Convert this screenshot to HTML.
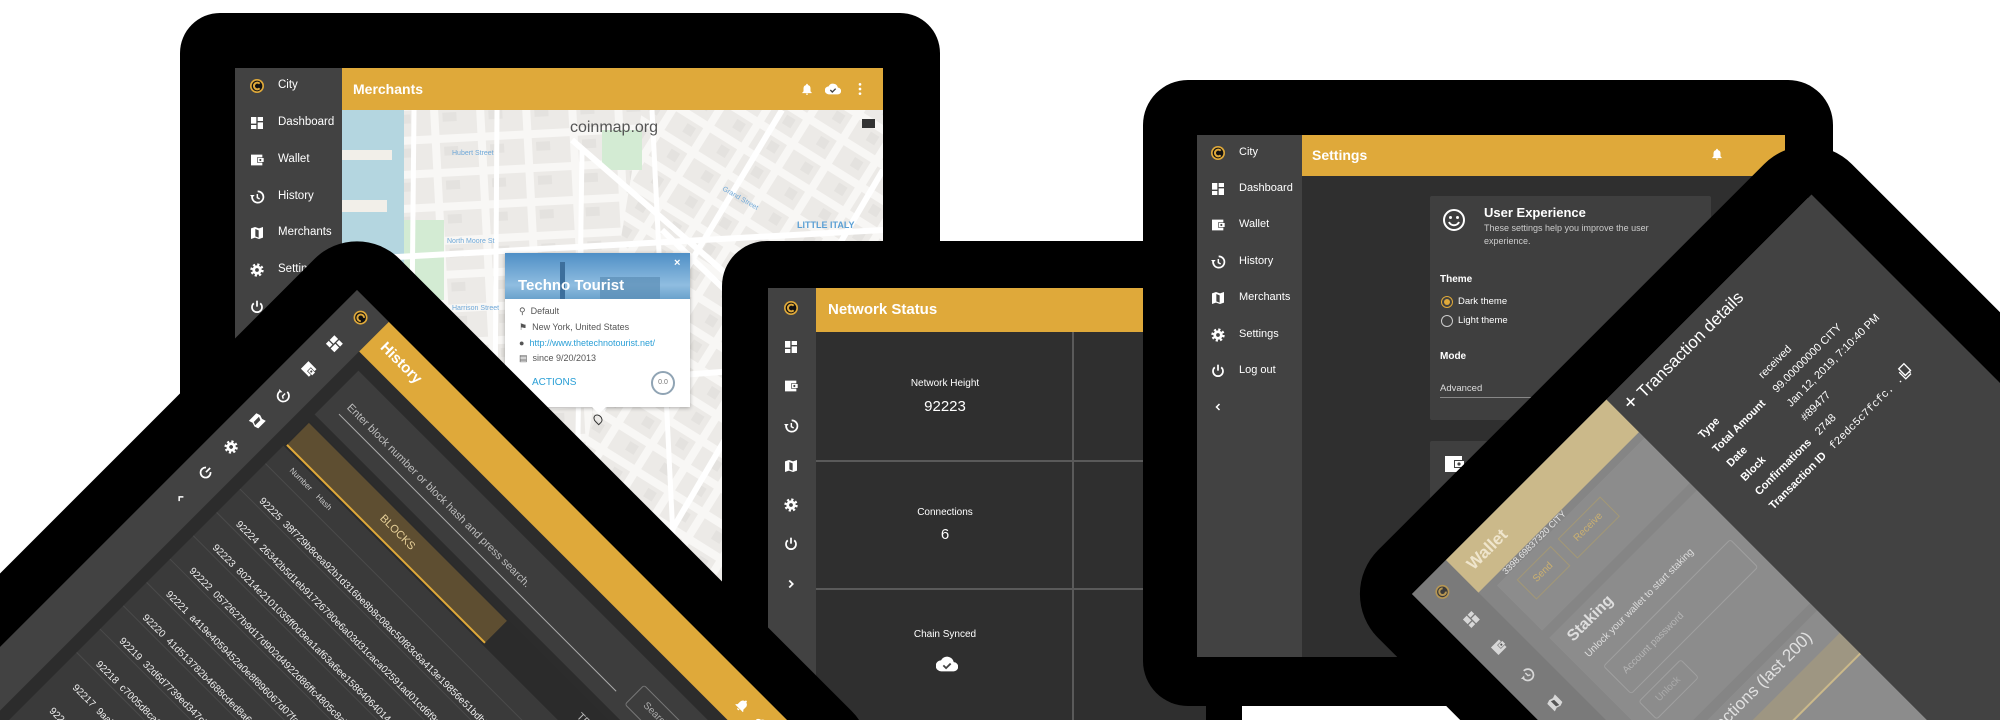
<!DOCTYPE html>
<html style="width:2000px;height:720px;overflow:hidden"><head><meta charset="utf-8">
<style>
*{margin:0;padding:0;box-sizing:border-box}
html,body{width:2000px;height:720px;overflow:hidden}
body{background:#fff;position:relative;font-family:"Liberation Sans",Arial,sans-serif;color:#fff}
#wrap{position:absolute;left:0;top:0;width:2000px;height:720px;overflow:hidden;background:#fff}
.a{position:absolute}
.i{position:absolute;width:16px;height:16px}
.t{position:absolute;white-space:nowrap}
.y{background:#dfa93a}
</style></head><body>
<svg width="0" height="0" style="position:absolute">
<defs>
<symbol id="logo" viewBox="0 0 24 24"><circle cx="12" cy="12" r="10.5" fill="#dfa93a"/><circle cx="12" cy="12" r="8" fill="#111"/><path d="M16 8.5a5 5 0 1 0 0 7" stroke="#dfa93a" stroke-width="3" fill="none"/></symbol>
<symbol id="dash" viewBox="0 0 24 24"><path d="M3 3h8v10H3zM13 3h8v6h-8zM13 11h8v10h-8zM3 15h8v6H3z" fill="#fff"/></symbol>
<symbol id="wal" viewBox="0 0 24 24"><path d="M3 4h17v4h-8v8h8v4H3z M13 9h9v6h-9z" fill="#fff"/><circle cx="17" cy="12" r="1.6" fill="#444"/></symbol>
<symbol id="his" viewBox="0 0 24 24"><path d="M13 3.5a8.5 8.5 0 1 1-8 6" stroke="#fff" stroke-width="2.6" fill="none"/><path d="M1.5 9l3.5 4 3.5-4z" fill="#fff"/><path d="M12.5 7.5v5.5l3.5 2" stroke="#fff" stroke-width="2.2" fill="none"/></symbol>
<symbol id="map" viewBox="0 0 24 24"><path d="M3 5l6-2 6 2 6-2v16l-6 2-6-2-6 2z" fill="#fff"/><path d="M9.5 6v11l5 2V8z" fill="#444"/></symbol>
<symbol id="gear" viewBox="0 0 24 24"><circle cx="12" cy="12" r="8" fill="none" stroke="#fff" stroke-width="4" stroke-dasharray="3.2 3.1"/><circle cx="12" cy="12" r="7" fill="#fff"/><circle cx="12" cy="12" r="2.8" fill="#444"/></symbol>
<symbol id="pow" viewBox="0 0 24 24"><path d="M7.2 6.5a7.5 7.5 0 1 0 9.6 0" stroke="#fff" stroke-width="2.6" fill="none"/><path d="M12 2.5v9" stroke="#fff" stroke-width="2.6"/></symbol>
<symbol id="chr" viewBox="0 0 24 24"><path d="M9 6l6 6-6 6" stroke="#fff" stroke-width="3" fill="none"/></symbol>
<symbol id="chl" viewBox="0 0 24 24"><path d="M15 6l-6 6 6 6" stroke="#fff" stroke-width="3" fill="none"/></symbol>
<symbol id="bell" viewBox="0 0 24 24"><path d="M12 3a1.5 1.5 0 0 1 1.5 1.5v.7A6 6 0 0 1 18 11v5l2 2v1H4v-1l2-2v-5a6 6 0 0 1 4.5-5.8v-.7A1.5 1.5 0 0 1 12 3zM10 20h4a2 2 0 0 1-4 0z" fill="#fff"/></symbol>
<symbol id="cloud" viewBox="0 0 24 24"><path d="M19.4 10A7.5 7.5 0 0 0 5.4 8 6 6 0 0 0 6 20h13a5 5 0 0 0 .4-10z" fill="#fff"/><path d="M8 13.5l3 3 5-5" stroke="#444" stroke-width="2" fill="none"/></symbol>
<symbol id="dots" viewBox="0 0 24 24"><circle cx="12" cy="5" r="2" fill="#fff"/><circle cx="12" cy="12" r="2" fill="#fff"/><circle cx="12" cy="19" r="2" fill="#fff"/></symbol>
</defs></svg>
<div id="wrap">

<!-- ============ MERCHANTS TABLET ============ -->
<div class="a" style="left:180px;top:13px;width:760px;height:707px;border-radius:40px 40px 0 0;background:#000"></div>
<div class="a" style="left:235px;top:68px;width:107px;height:652px;background:#424242"></div>
<svg class="i" style="left:249px;top:78px"><use href="#logo"/></svg><div class="t" style="left:278px;top:79px;font-size:11.5px">City</div>
<svg class="i" style="left:249px;top:115px"><use href="#dash"/></svg><div class="t" style="left:278px;top:116px;font-size:11.5px">Dashboard</div>
<svg class="i" style="left:249px;top:152px"><use href="#wal"/></svg><div class="t" style="left:278px;top:153px;font-size:11.5px">Wallet</div>
<svg class="i" style="left:249px;top:189px"><use href="#his"/></svg><div class="t" style="left:278px;top:190px;font-size:11.5px">History</div>
<svg class="i" style="left:249px;top:225px"><use href="#map"/></svg><div class="t" style="left:278px;top:226px;font-size:11.5px">Merchants</div>
<svg class="i" style="left:249px;top:262px"><use href="#gear"/></svg><div class="t" style="left:278px;top:263px;font-size:11.5px">Settings</div>
<svg class="i" style="left:249px;top:299px"><use href="#pow"/></svg><div class="t" style="left:278px;top:300px;font-size:11.5px">Log out</div>
<div class="a y" style="left:342px;top:68px;width:541px;height:42px"></div>
<div class="t" style="left:353px;top:81px;font-size:14px;font-weight:bold">Merchants</div>
<svg class="i" style="left:800px;top:82px;width:14px;height:14px"><use href="#bell"/></svg>
<svg class="i" style="left:825px;top:81px"><use href="#cloud"/></svg>
<svg class="i" style="left:852px;top:81px"><use href="#dots"/></svg>
<svg class="a" style="left:342px;top:110px" width="541" height="610" viewBox="0 0 541 610">
<defs>
<pattern id="blk" width="46" height="34" patternUnits="userSpaceOnUse" patternTransform="rotate(-3)"><rect width="46" height="34" fill="#f8f7f5"/><rect x="4" y="4" width="38" height="26" fill="#eceae7"/><rect x="8" y="8" width="14" height="9" fill="#e4e2df"/></pattern>
<pattern id="blk2" width="40" height="30" patternUnits="userSpaceOnUse" patternTransform="rotate(32)"><rect width="40" height="30" fill="#f8f7f5"/><rect x="4" y="4" width="32" height="22" fill="#eceae7"/><rect x="20" y="8" width="10" height="10" fill="#e4e2df"/></pattern>
</defs>
<rect width="541" height="610" fill="url(#blk)"/>
<path d="M300 0H541V610H200z" fill="url(#blk2)"/>
<path d="M0 0h62v260H0z" fill="#b4d6e0"/>
<path d="M0 40h50v10H0zM0 90h45v12H0z" fill="#f2efe9"/>
<path d="M62 110h40v80H62z" fill="#d3ebd3"/>
<path d="M260 20h40v40h-40z" fill="#d3ebd3"/>
<path d="M72 0l-6 610M155 0l-4 610M240 40l-8 570M310 0l30 610" stroke="#fff" stroke-width="5"/>
<path d="M0 150L541 120M0 290L541 250M320 120L541 330M230 30L541 300M440 0L260 300M541 60L330 420" stroke="#fff" stroke-width="6"/>
<text x="272" y="22" font-size="16" fill="#555" text-anchor="middle" font-family="Liberation Sans">coinmap.org</text>
<text x="455" y="118" font-size="9" fill="#5a9fd4" font-family="Liberation Sans" font-weight="bold">LITTLE ITALY</text>
<text x="110" y="45" font-size="7" fill="#6fa8d8" font-family="Liberation Sans">Hubert Street</text>
<text x="105" y="133" font-size="7" fill="#6fa8d8" font-family="Liberation Sans">North Moore St</text>
<text x="110" y="200" font-size="7" fill="#6fa8d8" font-family="Liberation Sans">Harrison Street</text>
<text x="380" y="80" font-size="7" fill="#6fa8d8" font-family="Liberation Sans" transform="rotate(30 380 80)">Grand Street</text>
<rect x="520" y="9" width="13" height="9" fill="#333"/>
</svg>
<!-- popup -->
<div class="a" style="left:505px;top:253px;width:185px;height:154px;background:#fff;box-shadow:0 1px 4px rgba(0,0,0,.3)"></div>
<div class="a" style="left:505px;top:253px;width:185px;height:46px;background:linear-gradient(180deg,#4f8fc6,#8fbde0 70%,#6aa2cc)"></div>
<div class="a" style="left:560px;top:262px;width:5px;height:37px;background:#3d6f9c"></div>
<div class="a" style="left:600px;top:277px;width:60px;height:22px;background:#5b8db5;opacity:.7"></div>
<div class="t" style="left:518px;top:277px;font-size:15px;font-weight:bold">Techno Tourist</div>
<div class="t" style="left:674px;top:257px;font-size:11px;font-weight:bold">×</div>
<div class="t" style="left:519px;top:306px;font-size:9px;color:#555">⚲&nbsp;&nbsp;Default</div>
<div class="t" style="left:519px;top:322px;font-size:9px;color:#555">⚑&nbsp;&nbsp;New York, United States</div>
<div class="t" style="left:519px;top:338px;font-size:9px;color:#2a9fd6"><span style="color:#555">●</span>&nbsp;&nbsp;http://www.thetechnotourist.net/</div>
<div class="t" style="left:519px;top:353px;font-size:9px;color:#555">▤&nbsp;&nbsp;since 9/20/2013</div>
<div class="t" style="left:532px;top:377px;font-size:10px;color:#2a9fd6">ACTIONS</div>
<div class="a" style="left:651px;top:371px;width:24px;height:24px;border:2px solid #90a4b4;border-radius:50%;color:#777;font-size:7px;text-align:center;line-height:20px">0.0</div>
<div class="a" style="left:592px;top:407px;width:0;height:0;border-left:7px solid transparent;border-right:7px solid transparent;border-top:7px solid #fff"></div>
<div class="a" style="left:594px;top:414px;width:8px;height:10px;border:1.5px solid #333;border-radius:50% 50% 50% 0;transform:rotate(-45deg)"></div>

<!-- ============ NETWORK TABLET ============ -->
<div class="a" style="left:722px;top:241px;width:520px;height:479px;border-radius:45px 45px 0 0;background:#000"></div>
<div class="a" style="left:768px;top:288px;width:48px;height:432px;background:#424242"></div>
<svg class="i" style="left:783px;top:300px"><use href="#logo"/></svg>
<svg class="i" style="left:783px;top:339px"><use href="#dash"/></svg>
<svg class="i" style="left:783px;top:378px"><use href="#wal"/></svg>
<svg class="i" style="left:783px;top:418px"><use href="#his"/></svg>
<svg class="i" style="left:783px;top:458px"><use href="#map"/></svg>
<svg class="i" style="left:783px;top:497px"><use href="#gear"/></svg>
<svg class="i" style="left:783px;top:536px"><use href="#pow"/></svg>
<svg class="i" style="left:784px;top:577px;width:14px;height:14px"><use href="#chr"/></svg>
<div class="a y" style="left:816px;top:288px;width:390px;height:44px"></div>
<div class="t" style="left:828px;top:301px;font-size:15px;font-weight:bold">Network Status</div>
<div class="a" style="left:816px;top:332px;width:390px;height:388px;background:#2f2f2f"></div>
<div class="a" style="left:1072px;top:332px;width:2px;height:388px;background:#5a5a5a"></div>
<div class="a" style="left:816px;top:460px;width:390px;height:2px;background:#5a5a5a"></div>
<div class="a" style="left:816px;top:588px;width:390px;height:2px;background:#5a5a5a"></div>
<div class="t" style="left:845px;width:200px;text-align:center;top:378px;font-size:10px">Network Height</div>
<div class="t" style="left:845px;width:200px;text-align:center;top:398px;font-size:15px">92223</div>
<div class="t" style="left:845px;width:200px;text-align:center;top:507px;font-size:10px">Connections</div>
<div class="t" style="left:845px;width:200px;text-align:center;top:526px;font-size:15px">6</div>
<div class="t" style="left:845px;width:200px;text-align:center;top:629px;font-size:10px">Chain Synced</div>
<svg class="i" style="left:936px;top:653px;width:22px;height:22px"><use href="#cloud"/></svg>

<!-- ============ HISTORY TABLET (rotated) ============ -->
<div class="a" style="left:357px;top:290px;width:0;height:0;transform:rotate(45deg);transform-origin:0 0">
 <div class="a" style="left:-52px;top:-52px;width:760px;height:900px;border-radius:60px;background:#000"></div>
 <div class="a" style="left:0;top:0;width:660px;height:800px;background:#2c2c2c"></div>
 <div class="a" style="left:0;top:0;width:45px;height:800px;background:#424242"></div>
 <svg class="i" style="left:14px;top:9px"><use href="#logo"/></svg>
 <svg class="i" style="left:14px;top:46px"><use href="#dash"/></svg>
 <svg class="i" style="left:14px;top:82px"><use href="#wal"/></svg>
 <svg class="i" style="left:14px;top:119px"><use href="#his"/></svg>
 <svg class="i" style="left:14px;top:155px"><use href="#map"/></svg>
 <svg class="i" style="left:14px;top:192px"><use href="#gear"/></svg>
 <svg class="i" style="left:14px;top:228px"><use href="#pow"/></svg>
 <svg class="i" style="left:16px;top:266px;width:12px;height:12px"><use href="#chl"/></svg>
 <div class="a y" style="left:45px;top:0;width:615px;height:42px"></div>
 <div class="t" style="left:57px;top:12px;font-size:15px;font-weight:bold">History</div>
 <svg class="i" style="left:558px;top:13px"><use href="#bell"/></svg>
 <svg class="i" style="left:586px;top:13px"><use href="#cloud"/></svg>
 <div class="a" style="left:58px;top:56px;width:580px;height:62px;background:#3d3d3d"></div>
 <div class="t" style="left:76px;top:82px;font-size:11px;color:#bbb">Enter block number or block hash and press search.</div>
 <div class="a" style="left:75px;top:100px;width:392px;height:1px;background:#aaa"></div>
 <div class="a" style="left:482px;top:76px;width:60px;height:28px;border:1px solid #777;border-radius:3px;color:#aaa;font-size:10px;text-align:center;line-height:26px">Search</div>
 <div class="a" style="left:58px;top:126px;width:580px;height:700px;background:#3a3a3a"></div>
 <div class="a" style="left:58px;top:126px;width:580px;height:36px;background:#2b2b2b"></div>
 <div class="a" style="left:60px;top:128px;width:280px;height:32px;background:#5e4e31;border-bottom:2px solid #dfa93a;color:#e6cf98;font-size:11px;text-align:center;line-height:30px">BLOCKS</div>
 <div class="a" style="left:390px;top:128px;width:220px;height:32px;color:#bbb;font-size:11px;text-align:center;line-height:32px">TRANSACTIONS</div>
 <div class="t" style="left:80px;top:169px;font-size:8px;color:#ccc">Number&nbsp;&nbsp;&nbsp;&nbsp;Hash</div>
 <div class="a" style="left:58px;top:187px;width:580px;height:1px;background:#4a4a4a"></div>
 <div style="position:absolute;left:80px;top:200px;font-size:10px;color:#eee;line-height:33px;white-space:nowrap">
 92225&nbsp;&nbsp;38f729b8cea92b1d316be8b8c08ac50f83c6a413e19856e51bdb5e8892<br>
 92224&nbsp;&nbsp;26342b5d1eb91726780e6a03d31caca02591ad01cd6f9c9b8118e4d2<br>
 92223&nbsp;&nbsp;80214e2101035ff0d3ea1af63a6ee15864064014c53b621f0c2a6d1<br>
 92222&nbsp;&nbsp;0572627b9d17d902d4922d86ffc4805c8a7d524c0a3e1b9f6d27a4<br>
 92221&nbsp;&nbsp;a419e4059452a0e8f896067d07faad6e3b12c4d5e6f708192a3b4c<br>
 92220&nbsp;&nbsp;41d513782b4688cded8a6926542a06b7c1d2e3f4a5b6c7d8e9f0a1<br>
 92219&nbsp;&nbsp;32d6d7739ed347c7a04e4f1b2c3d4e5f6a7b8c9d0e1f2a3b4c5d6e<br>
 92218&nbsp;&nbsp;c7005d8ca6608a1b2c3d4e5f60718293a4b5c6d7e8f9a0b1c2d3e4<br>
 92217&nbsp;&nbsp;9aa5a8cf64e3a2b1c0d9e8f7a6b5c4d3e2f1a0b9c8d7e6f5a4b3c2<br>
 92216&nbsp;&nbsp;8b1c2d3e4f5a6b7c8d9e0f1a2b3c4d5e6f7a8b9c0d1e2f3a4b5c6d
 </div>
 <div class="a" style="left:58px;top:223px;width:580px;height:1px;background:#4a4a4a"></div>
 <div class="a" style="left:58px;top:256px;width:580px;height:1px;background:#4a4a4a"></div>
 <div class="a" style="left:58px;top:289px;width:580px;height:1px;background:#4a4a4a"></div>
 <div class="a" style="left:58px;top:322px;width:580px;height:1px;background:#4a4a4a"></div>
 <div class="a" style="left:58px;top:355px;width:580px;height:1px;background:#4a4a4a"></div>
 <div class="a" style="left:58px;top:388px;width:580px;height:1px;background:#4a4a4a"></div>
 <div class="a" style="left:58px;top:421px;width:580px;height:1px;background:#4a4a4a"></div>
 <div class="a" style="left:58px;top:454px;width:580px;height:1px;background:#4a4a4a"></div>
</div>

<!-- ============ SETTINGS TABLET ============ -->
<div class="a" style="left:1143px;top:80px;width:690px;height:626px;border-radius:45px;background:#000"></div>
<div class="a" style="left:1197px;top:135px;width:105px;height:522px;background:#424242"></div>
<svg class="i" style="left:1210px;top:145px"><use href="#logo"/></svg><div class="t" style="left:1239px;top:146px;font-size:11px">City</div>
<svg class="i" style="left:1210px;top:181px"><use href="#dash"/></svg><div class="t" style="left:1239px;top:182px;font-size:11px">Dashboard</div>
<svg class="i" style="left:1210px;top:217px"><use href="#wal"/></svg><div class="t" style="left:1239px;top:218px;font-size:11px">Wallet</div>
<svg class="i" style="left:1210px;top:254px"><use href="#his"/></svg><div class="t" style="left:1239px;top:255px;font-size:11px">History</div>
<svg class="i" style="left:1210px;top:290px"><use href="#map"/></svg><div class="t" style="left:1239px;top:291px;font-size:11px">Merchants</div>
<svg class="i" style="left:1210px;top:327px"><use href="#gear"/></svg><div class="t" style="left:1239px;top:328px;font-size:11px">Settings</div>
<svg class="i" style="left:1210px;top:363px"><use href="#pow"/></svg><div class="t" style="left:1239px;top:364px;font-size:11px">Log out</div>
<svg class="i" style="left:1212px;top:401px;width:12px;height:12px"><use href="#chl"/></svg>
<div class="a y" style="left:1302px;top:135px;width:483px;height:41px"></div>
<div class="t" style="left:1312px;top:147px;font-size:14px;font-weight:bold">Settings</div>
<svg class="i" style="left:1710px;top:147px;width:14px;height:14px"><use href="#bell"/></svg>
<div class="a" style="left:1302px;top:176px;width:483px;height:481px;background:#2f2f2f"></div>
<div class="a" style="left:1430px;top:196px;width:281px;height:224px;background:#3f3f3f;border-radius:2px"></div>
<svg class="a" style="left:1442px;top:208px" width="24" height="24" viewBox="0 0 24 24"><circle cx="12" cy="12" r="10" stroke="#fff" stroke-width="2" fill="none"/><circle cx="8.5" cy="9.5" r="1.5" fill="#fff"/><circle cx="15.5" cy="9.5" r="1.5" fill="#fff"/><path d="M7 14a5.5 5.5 0 0 0 10 0" stroke="#fff" stroke-width="2" fill="none"/></svg>
<div class="t" style="left:1484px;top:205px;font-size:13px;font-weight:bold">User Experience</div>
<div class="t" style="left:1484px;top:222px;font-size:9px;color:#ccc;line-height:13px">These settings help you improve the user<br>experience.</div>
<div class="t" style="left:1440px;top:274px;font-size:10px;font-weight:bold">Theme</div>
<div class="a" style="left:1441px;top:296px;width:12px;height:12px;border:1.5px solid #dfa93a;border-radius:50%"></div>
<div class="a" style="left:1444px;top:299px;width:6px;height:6px;background:#dfa93a;border-radius:50%"></div>
<div class="t" style="left:1458px;top:296px;font-size:9.5px">Dark theme</div>
<div class="a" style="left:1441px;top:315px;width:12px;height:12px;border:1.5px solid #ccc;border-radius:50%"></div>
<div class="t" style="left:1458px;top:315px;font-size:9.5px">Light theme</div>
<div class="t" style="left:1440px;top:351px;font-size:10px;font-weight:bold">Mode</div>
<div class="t" style="left:1440px;top:383px;font-size:9.5px;color:#ddd">Advanced</div>
<div class="a" style="left:1440px;top:397px;width:120px;height:1px;background:#888"></div>
<div class="a" style="left:1430px;top:441px;width:281px;height:212px;background:#3f3f3f;border-radius:2px"></div>
<svg class="a" style="left:1442px;top:452px;width:24px;height:24px"><use href="#wal"/></svg>

<!-- ============ TRANSACTION TABLET (rotated) ============ -->
<div class="a" style="left:1412px;top:594px;width:0;height:0;transform:rotate(-45deg);transform-origin:0 0">
 <div class="a" style="left:-55px;top:-55px;width:670px;height:900px;border-radius:62px;background:#000"></div>
 <div class="a" style="left:0;top:0;width:560px;height:800px;background:#858585"></div>
 <div class="a" style="left:0;top:0;width:48px;height:800px;background:#7a7a7a"></div>
 <svg class="i" style="left:15px;top:12px;opacity:.6"><use href="#logo"/></svg>
 <svg class="i" style="left:16px;top:52px;opacity:.7"><use href="#dash"/></svg>
 <svg class="i" style="left:16px;top:91px;opacity:.7"><use href="#wal"/></svg>
 <svg class="i" style="left:16px;top:131px;opacity:.7"><use href="#his"/></svg>
 <svg class="i" style="left:16px;top:170px;opacity:.7"><use href="#map"/></svg>
 <div class="a" style="left:48px;top:0;width:227px;height:46px;background:#cbb98a"></div>
 <div class="t" style="left:60px;top:12px;font-size:17px;font-weight:bold;color:#efe5cc">Wallet</div>
 <div class="a" style="left:66px;top:54px;width:209px;height:64px;background:#8c8c8c"></div>
 <div class="t" style="left:80px;top:45px;font-size:9px;color:#e8e8e8">3398.69837320 CITY</div>
 <div class="a" style="left:84px;top:64px;width:48px;height:28px;border:1px solid #a39876;color:#cbb070;font-size:10px;text-align:center;line-height:26px">Send</div>
 <div class="a" style="left:142px;top:64px;width:60px;height:28px;border:1px solid #a39876;color:#cbb070;font-size:10px;text-align:center;line-height:26px">Receive</div>
 <div class="a" style="left:66px;top:128px;width:209px;height:160px;background:#8c8c8c"></div>
 <div class="t" style="left:80px;top:135px;font-size:16px;font-weight:bold;color:#ddd">Staking</div>
 <div class="t" style="left:80px;top:162px;font-size:10px;color:#ddd">Unlock your wallet to start staking</div>
 <div class="a" style="left:84px;top:186px;width:180px;height:40px;border:1px solid #a0a0a0;border-radius:3px;color:#b5b5b5;font-size:10px;padding-left:10px;line-height:38px">Account password</div>
 <div class="a" style="left:84px;top:236px;width:60px;height:26px;border:1px solid #a0a0a0;border-radius:3px;color:#aaa;font-size:10px;text-align:center;line-height:24px">Unlock</div>
 <div class="a" style="left:66px;top:298px;width:209px;height:300px;background:#8c8c8c"></div>
 <div class="t" style="left:80px;top:300px;font-size:17px;color:#e0e0e0">Transactions (last 200)</div>
 <div class="a" style="left:150px;top:330px;width:125px;height:30px;background:#9e9682;border-bottom:2px solid #cbb98a"></div>
 <div class="a" style="left:275px;top:0;width:290px;height:800px;background:#424242"></div>
 <div class="t" style="left:284px;top:6px;font-size:22px;font-weight:300">+</div>
 <div class="t" style="left:302px;top:11px;font-size:17px">Transaction details</div>
 <div style="position:absolute;left:315px;top:83px;font-size:11px;font-weight:bold;line-height:20px;white-space:nowrap">Type<br>Total Amount<br>Date<br>Block<br>Confirmations<br>Transaction ID</div>
 <div style="position:absolute;left:400px;top:83px;font-size:11px;line-height:20px;white-space:nowrap">received<br>99.00000000 CITY<br>Jan 12, 2019, 7:10:40 PM<br>#89477<br>2748<br><span style="font-family:'Liberation Mono',monospace">f2edc5c7fcfc. . .</span></div>
 <svg class="a" style="left:498px;top:183px" width="16" height="16" viewBox="0 0 24 24"><path d="M8 3h11v14H8z" stroke="#fff" stroke-width="2" fill="none"/><path d="M5 7v14h11" stroke="#fff" stroke-width="2" fill="none"/></svg>
</div>
</div>
</body></html>
